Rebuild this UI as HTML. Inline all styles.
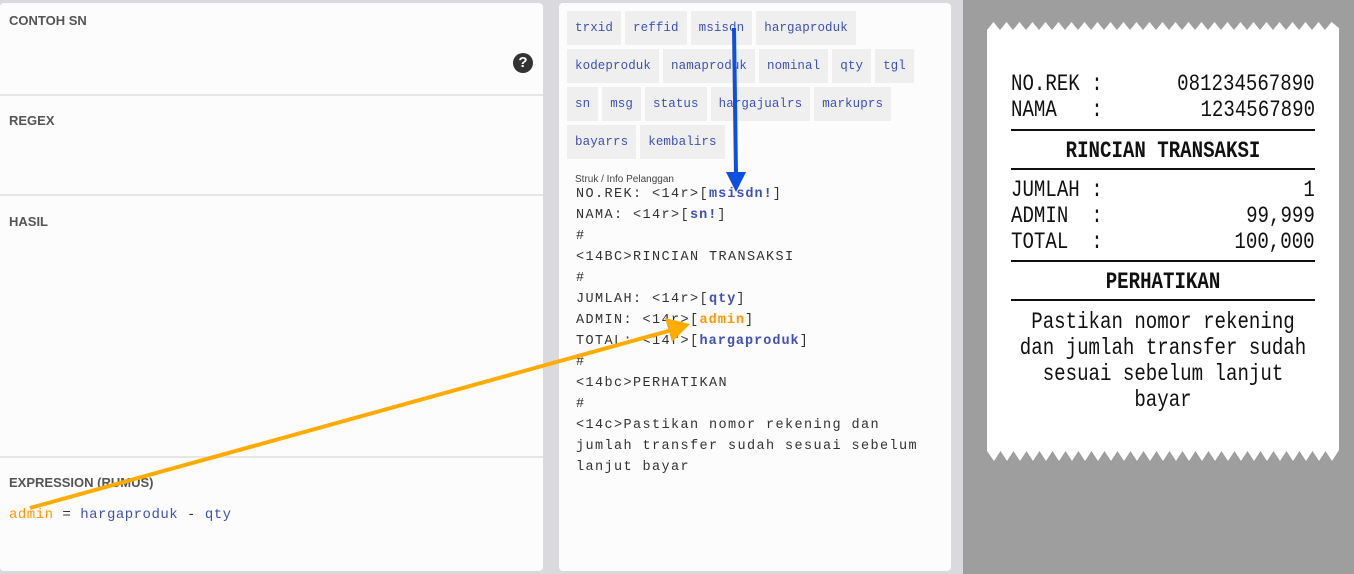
<!DOCTYPE html>
<html><head><meta charset="utf-8"><style>
*{margin:0;padding:0;box-sizing:border-box}
body{width:1354px;height:574px;background:#d9d9de;position:relative;overflow:hidden;font-family:"Liberation Sans",sans-serif}
.panel{position:absolute;background:#fcfcfc;border-radius:4px}
.lbl{position:absolute;left:9px;font-size:13px;font-weight:bold;color:#555}
.div{position:absolute;left:0;width:543px;height:2px;background:#e6e6e6}
.tags{position:absolute;left:567px;top:11px;width:358px;display:flex;flex-wrap:wrap;gap:4px}
.tag{height:34px;line-height:34px;padding:0 8px;background:#efefef;font-family:"Liberation Mono",monospace;font-size:12.5px;color:#3f51b5;letter-spacing:0.1px}
.code{position:absolute;left:576px;top:184px;font-family:"Liberation Mono",monospace;font-size:13.5px;letter-spacing:1.4px;line-height:21px;color:#333;white-space:pre}
.b{color:#3f51b5;font-weight:bold;letter-spacing:1px}.o{color:#ff9800;font-weight:bold;letter-spacing:1px}
.r{position:absolute;font-family:"Liberation Mono",monospace;font-size:23px;color:#111;white-space:pre;line-height:26px;transform:scaleX(0.83)}
.hl{position:absolute;left:1011px;width:304px;height:2px;background:#111}
</style></head><body>
<div class="panel" style="left:0;top:3px;width:543px;height:568px"></div>
<div class="lbl" style="top:13px">CONTOH SN</div>
<div class="div" style="top:94px"></div>
<div class="lbl" style="top:113px">REGEX</div>
<div class="div" style="top:194px"></div>
<div class="lbl" style="top:214px">HASIL</div>
<div class="div" style="top:456px"></div>
<div class="lbl" style="top:475px">EXPRESSION (RUMUS)</div>
<div style="position:absolute;left:513px;top:53px;width:20px;height:20px;border-radius:50%;background:#333;color:#fff;font-size:15px;font-weight:bold;text-align:center;line-height:20px">?</div>
<div style="position:absolute;left:9px;top:507px;font-family:'Liberation Mono',monospace;font-size:14px;letter-spacing:0.5px;white-space:pre;color:#333"><span style="color:#ff9800">admin</span> = <span style="color:#3f51b5">hargaproduk</span> - <span style="color:#3f51b5">qty</span></div>

<div class="panel" style="left:559px;top:3px;width:392px;height:568px"></div>
<div class="tags">
<span class="tag">trxid</span><span class="tag">reffid</span><span class="tag">msisdn</span><span class="tag">hargaproduk</span>
<span class="tag">kodeproduk</span><span class="tag">namaproduk</span><span class="tag">nominal</span><span class="tag">qty</span><span class="tag">tgl</span>
<span class="tag">sn</span><span class="tag">msg</span><span class="tag">status</span><span class="tag">hargajualrs</span><span class="tag">markuprs</span>
<span class="tag">bayarrs</span><span class="tag">kembalirs</span>
</div>
<div style="position:absolute;left:575px;top:174px;font-size:10px;color:#444">Struk / Info Pelanggan</div>
<div class="code">NO.REK: &lt;14r&gt;[<span class="b">msisdn!</span>]
NAMA: &lt;14r&gt;[<span class="b">sn!</span>]
#
&lt;14BC&gt;RINCIAN TRANSAKSI
#
JUMLAH: &lt;14r&gt;[<span class="b">qty</span>]
ADMIN: &lt;14r&gt;[<span class="o">admin</span>]
TOTAL: &lt;14r&gt;[<span class="b">hargaproduk</span>]
#
&lt;14bc&gt;PERHATIKAN
#
&lt;14c&gt;Pastikan nomor rekening dan
jumlah transfer sudah sesuai sebelum
lanjut bayar</div>

<div style="position:absolute;left:963px;top:0;width:391px;height:574px;background:#9e9e9e"></div>
<svg style="position:absolute;left:987px;top:20px" width="352" height="442" viewBox="0 0 352 442">
<path d="M0 10 L6.5 2 L13 10 L19.5 2 L26 10 L32.5 2 L39 10 L45.5 2 L52 10 L58.5 2 L65 10 L71.5 2 L78 10 L84.5 2 L91 10 L97.5 2 L104 10 L110.5 2 L117 10 L123.5 2 L130 10 L136.5 2 L143 10 L149.5 2 L156 10 L162.5 2 L169 10 L175.5 2 L182 10 L188.5 2 L195 10 L201.5 2 L208 10 L214.5 2 L221 10 L227.5 2 L234 10 L240.5 2 L247 10 L253.5 2 L260 10 L266.5 2 L273 10 L279.5 2 L286 10 L292.5 2 L299 10 L305.5 2 L312 10 L318.5 2 L325 10 L331.5 2 L338 10 L344.5 2 L352 8 L352 430 L345 441 L338.5 431 L332 441 L325.5 431 L319 441 L312.5 431 L306 441 L299.5 431 L293 441 L286.5 431 L280 441 L273.5 431 L267 441 L260.5 431 L254 441 L247.5 431 L241 441 L234.5 431 L228 441 L221.5 431 L215 441 L208.5 431 L202 441 L195.5 431 L189 441 L182.5 431 L176 441 L169.5 431 L163 441 L156.5 431 L150 441 L143.5 431 L137 441 L130.5 431 L124 441 L117.5 431 L111 441 L104.5 431 L98 441 L91.5 431 L85 441 L78.5 431 L72 441 L65.5 431 L59 441 L52.5 431 L46 441 L39.5 431 L33 441 L26.5 431 L20 441 L13.5 431 L7 441 L0 431 Z" fill="#fff"/>
</svg>
<div class="r" style="left:1011px;top:71px;transform-origin:left">NO.REK :</div>
<div class="r" style="right:39px;top:71px;transform-origin:right">081234567890</div>
<div class="r" style="left:1011px;top:97px;transform-origin:left">NAMA   :</div>
<div class="r" style="right:39px;top:97px;transform-origin:right">1234567890</div>
<div class="hl" style="top:129px"></div>
<div class="r" style="left:987px;width:352px;text-align:center;top:138px;font-weight:bold">RINCIAN TRANSAKSI</div>
<div class="hl" style="top:168px"></div>
<div class="r" style="left:1011px;top:177px;transform-origin:left">JUMLAH :</div>
<div class="r" style="right:39px;top:177px;transform-origin:right">1</div>
<div class="r" style="left:1011px;top:203px;transform-origin:left">ADMIN  :</div>
<div class="r" style="right:39px;top:203px;transform-origin:right">99,999</div>
<div class="r" style="left:1011px;top:229px;transform-origin:left">TOTAL  :</div>
<div class="r" style="right:39px;top:229px;transform-origin:right">100,000</div>
<div class="hl" style="top:260px"></div>
<div class="r" style="left:987px;width:352px;text-align:center;top:269px;font-weight:bold">PERHATIKAN</div>
<div class="hl" style="top:299px"></div>
<div class="r" style="left:987px;width:352px;text-align:center;top:309px">Pastikan nomor rekening
dan jumlah transfer sudah
sesuai sebelum lanjut
bayar</div>

<svg style="position:absolute;left:0;top:0" width="1354" height="574">
<line x1="734" y1="28" x2="736" y2="176" stroke="#0d4fe0" stroke-width="4"/>
<polygon points="726,172 746,172 736,192" fill="#0d4fe0"/>
<line x1="30" y1="508" x2="672" y2="330" stroke="#ffab00" stroke-width="4"/>
<polygon points="665,318 690,324 672,342" fill="#ffab00"/>
</svg>
</body></html>
